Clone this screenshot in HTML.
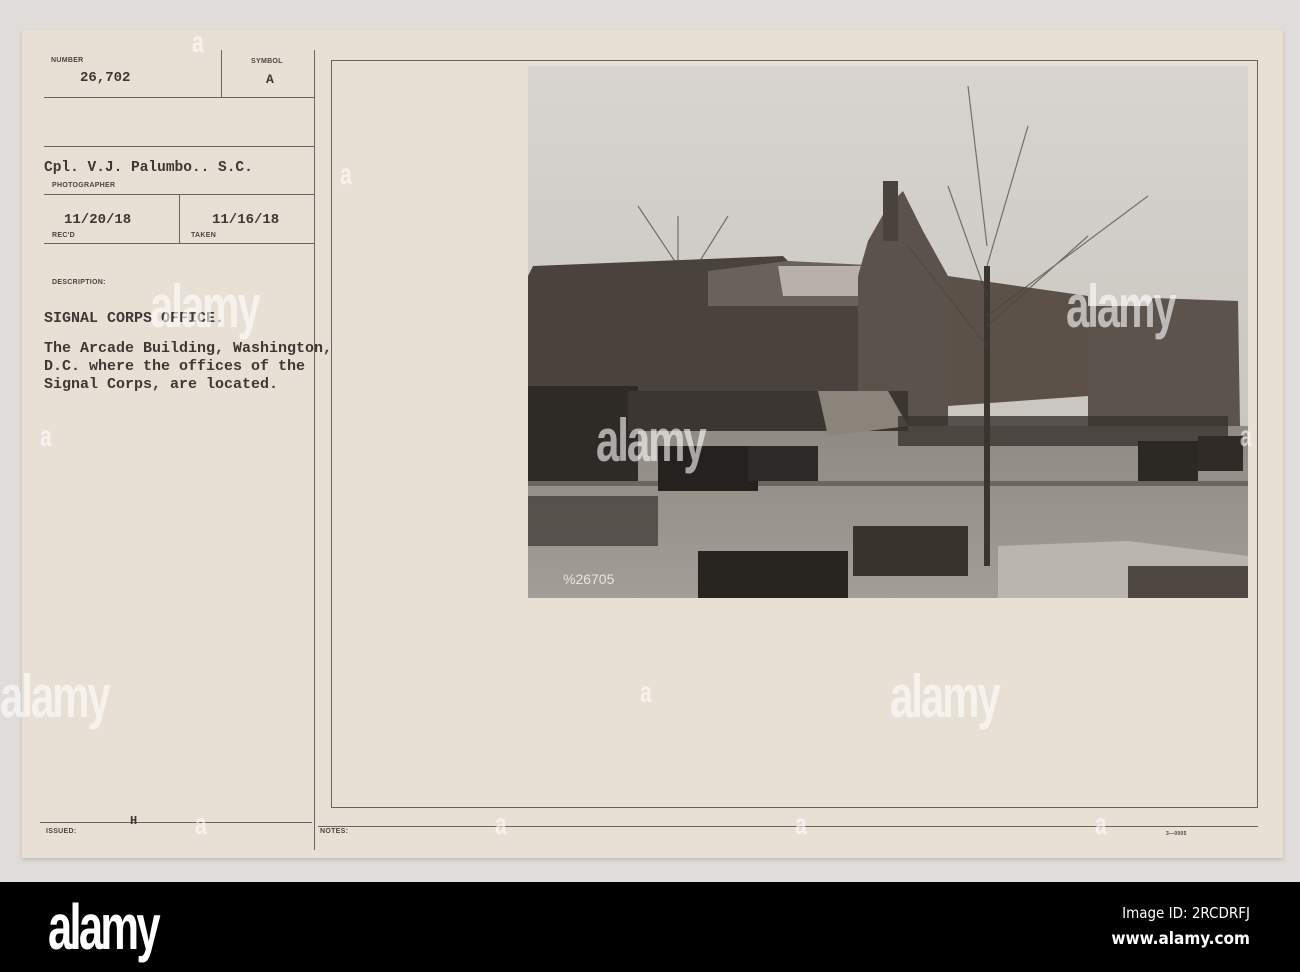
<!DOCTYPE html>
<html><head><style>
body{margin:0;width:1300px;height:972px;background:#dfdcd9;position:relative;overflow:hidden;font-family:"Liberation Mono",monospace;}
.card{position:absolute;left:22px;top:30px;width:1261px;height:828px;background:#e9e0d5;box-shadow:0 2px 4px rgba(0,0,0,.15);}
.l{position:absolute;background:#6b645c;}
.t{position:absolute;color:#3a3733;white-space:nowrap;}
.s{font-family:"Liberation Sans",sans-serif;font-size:7px;font-weight:bold;color:#4a4540;letter-spacing:.3px;}
.m{font-size:15px;font-weight:bold;color:#3c3833;}
.bar{position:absolute;left:0;top:882px;width:1300px;height:90px;background:#000;}
.wm{position:absolute;font-family:"Liberation Sans",sans-serif;font-weight:bold;color:rgba(255,255,255,.6);letter-spacing:-3px;transform:scaleX(.7);transform-origin:left;}
</style></head><body>
<div class="card"></div>
<div class="l" style="left:44px;top:97px;width:270px;height:1px"></div>
<div class="l" style="left:221px;top:50px;width:1px;height:47px"></div>
<div class="l" style="left:44px;top:146px;width:270px;height:1px"></div>
<div class="l" style="left:44px;top:194px;width:270px;height:1px"></div>
<div class="l" style="left:179px;top:195px;width:1px;height:48px"></div>
<div class="l" style="left:44px;top:243px;width:270px;height:1px"></div>
<div class="l" style="left:314px;top:50px;width:1px;height:800px"></div>
<div class="l" style="left:40px;top:822px;width:272px;height:1px"></div>
<div class="l" style="left:318px;top:826px;width:940px;height:1px"></div>
<div style="position:absolute;left:331px;top:60px;width:927px;height:748px;border:1px solid #6b645c;box-sizing:border-box"></div>
<div class="t s" style="left:51px;top:57px">NUMBER</div>
<div class="t m" style="left:80px;top:70px;font-size:14px">26,702</div>
<div class="t s" style="left:251px;top:58px">SYMBOL</div>
<div class="t m" style="left:266px;top:72px;font-size:13px">A</div>
<div class="t m" style="left:44px;top:160px;font-size:14.5px">Cpl. V.J. Palumbo.. S.C.</div>
<div class="t s" style="left:52px;top:182px">PHOTOGRAPHER</div>
<div class="t m" style="left:64px;top:212px;font-size:14px">11/20/18</div>
<div class="t s" style="left:52px;top:232px">REC'D</div>
<div class="t m" style="left:212px;top:212px;font-size:14px">11/16/18</div>
<div class="t s" style="left:191px;top:232px">TAKEN</div>
<div class="t s" style="left:52px;top:279px">DESCRIPTION:</div>
<div class="t m" style="left:44px;top:310px">SIGNAL CORPS OFFICE.</div>
<div class="t m" style="left:44px;top:340px;line-height:18px">The Arcade Building, Washington,<br>D.C. where the offices of the<br>Signal Corps, are located.</div>
<div class="t s" style="left:46px;top:828px">ISSUED:</div>
<div class="t m" style="left:130px;top:814px;font-size:12px">H</div>
<div class="t s" style="left:320px;top:828px">NOTES:</div>
<div class="t s" style="left:1166px;top:831px;font-size:5px">3—0005</div>
<svg style="position:absolute;left:528px;top:66px" width="720" height="532" viewBox="0 0 720 532">
<defs><linearGradient id="sky" x1="0" y1="0" x2="0" y2="1"><stop offset="0" stop-color="#d8d5d0"/><stop offset="1" stop-color="#c2beb8"/></linearGradient>
<linearGradient id="st" x1="0" y1="0" x2="0" y2="1"><stop offset="0" stop-color="#8f8a83"/><stop offset="1" stop-color="#a29d96"/></linearGradient></defs>
<rect width="720" height="532" fill="url(#sky)"/>
<rect y="360" width="720" height="172" fill="url(#st)"/>
<polygon points="0,210 5,200 255,190 260,195 380,205 380,360 0,360" fill="#4a423c"/>
<polygon points="180,205 260,195 360,200 360,240 180,240" fill="#6a625a"/>
<polygon points="250,200 350,200 360,230 255,230" fill="#b7b1a9"/>
<polygon points="340,175 360,140 375,125 395,165 420,210 420,360 330,360 330,210" fill="#5a524b"/>
<rect x="355" y="115" width="15" height="60" fill="#4a423c"/>
<polygon points="420,210 560,230 560,330 420,340" fill="#5b5149"/>
<polygon points="560,240 620,240 625,232 710,235 712,360 560,360" fill="#5c534c"/>
<rect x="0" y="320" width="110" height="95" fill="#2e2a26"/>
<rect x="100" y="325" width="280" height="40" fill="#3c3632"/>
<polygon points="290,325 360,325 380,360 300,370" fill="#8b847b"/>
<rect x="0" y="415" width="720" height="5" fill="#6d665e"/>
<rect x="370" y="350" width="330" height="30" fill="#3a3430" opacity=".8"/>
<rect x="130" y="380" width="100" height="45" fill="#25211e"/>
<rect x="220" y="380" width="70" height="35" fill="#2e2a27"/>
<rect x="170" y="485" width="150" height="47" fill="#28241f"/>
<rect x="325" y="460" width="115" height="50" fill="#3a342f"/>
<rect x="610" y="375" width="60" height="40" fill="#2c2824"/>
<rect x="670" y="370" width="45" height="35" fill="#302b27"/>
<rect x="0" y="430" width="130" height="50" fill="#3a3531" opacity=".7"/>
<polygon points="470,480 600,475 720,490 720,532 470,532" fill="#bab5ae"/>
<rect x="600" y="500" width="120" height="32" fill="#4f4842"/>
<rect x="456" y="200" width="6" height="300" fill="#3b3530"/>
<g stroke="#4a443e" stroke-width="1.2" fill="none" opacity=".7">
<path d="M459 230 L420 120 M459 200 L500 60 M459 180 L440 20 M459 260 L560 170 M459 280 L380 180 M459 250 L620 130"/>
<path d="M150 320 L150 150 M150 200 L110 140 M150 230 L200 150 M150 260 L90 230"/>
</g>
<text x="35" y="518" font-family="Liberation Sans,sans-serif" font-size="14" fill="#e8e4de">%26705</text>
</svg>
<div class="wm" style="left:150px;top:272px;font-size:60px">alamy</div>
<div class="wm" style="left:0px;top:662px;font-size:60px">alamy</div>
<div class="wm" style="left:1066px;top:272px;font-size:60px">alamy</div>
<div class="wm" style="left:596px;top:406px;font-size:60px">alamy</div>
<div class="wm" style="left:890px;top:662px;font-size:60px">alamy</div>
<div class="wm" style="left:192px;top:26px;font-size:30px">a</div>
<div class="wm" style="left:340px;top:158px;font-size:30px">a</div>
<div class="wm" style="left:40px;top:420px;font-size:30px">a</div>
<div class="wm" style="left:640px;top:676px;font-size:30px">a</div>
<div class="wm" style="left:1240px;top:420px;font-size:30px">a</div>
<div class="wm" style="left:195px;top:808px;font-size:30px">a</div>
<div class="wm" style="left:495px;top:808px;font-size:30px">a</div>
<div class="wm" style="left:795px;top:808px;font-size:30px">a</div>
<div class="wm" style="left:1095px;top:808px;font-size:30px">a</div>
<div class="bar"></div>
<div style="position:absolute;left:48px;top:890px;font-family:'Liberation Sans',sans-serif;font-weight:bold;font-size:64px;color:#fff;letter-spacing:-4px;transform:scaleX(.68);transform-origin:left">alamy</div>
<div style="position:absolute;right:50px;top:900px;font-family:'DejaVu Sans Condensed','Liberation Sans',sans-serif;color:#fff;font-size:15px;text-align:right;line-height:26px">Image ID: 2RCDRFJ<br><b style="font-size:17px">www.alamy.com</b></div>
</body></html>
